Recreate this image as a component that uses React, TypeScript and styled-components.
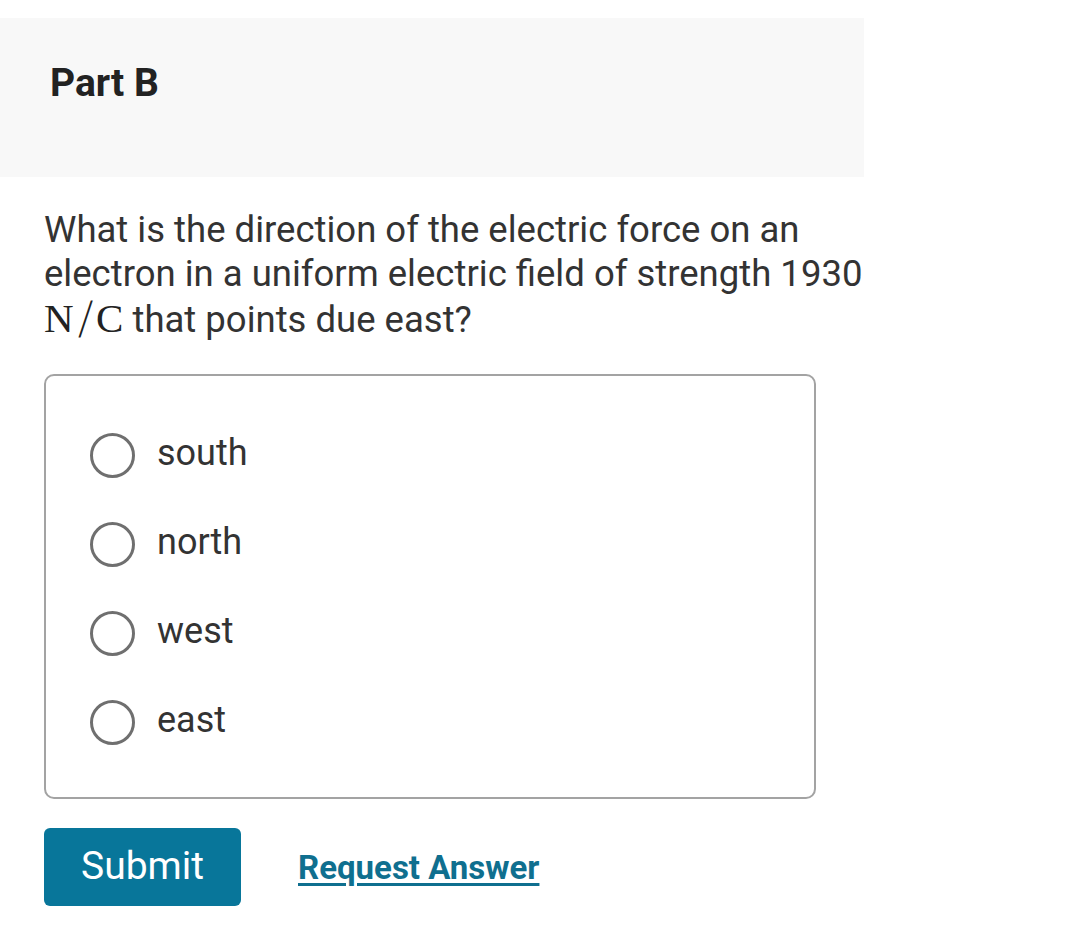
import styled, { createGlobalStyle } from "styled-components";

const GlobalStyle = createGlobalStyle`
  body {
    margin: 0;
    background: #ffffff;
    font-family: Roboto, "Liberation Sans", sans-serif;
    color: #333333;
  }
`;

const Page = styled.div`
  padding-top: 18px;
  width: 1080px;
`;

const PartHeader = styled.div`
  width: 864px;
  height: 159px;
  box-sizing: border-box;
  background: #f8f8f8;
  padding: 43px 0 0 50px;
`;

const PartTitle = styled.h2`
  margin: 0;
  font-size: 39px;
  line-height: 44px;
  font-weight: 700;
  color: #222222;
`;

const Content = styled.div`
  padding: 31px 0 0 44px;
`;

const Question = styled.p`
  margin: 0;
  font-size: 36.5px;
  line-height: 44px;
  color: #333333;
`;

const MathUnit = styled.span`
  font-family: "Liberation Serif", "DejaVu Serif", serif;
  font-size: 41px;
  color: #222222;
`;

const Slash = styled.span`
  display: inline-block;
  transform: scaleY(1.35) skewX(-6deg);
  margin: 0 5px 0 6px;
`;

const OptionBox = styled.div`
  margin-top: 32px;
  width: 772px;
  height: 425px;
  box-sizing: border-box;
  border: 2px solid #a3a3a3;
  border-radius: 10px;
  padding: 35px 0 0 44px;
  display: flex;
  flex-direction: column;
`;

const OptionRow = styled.label`
  display: flex;
  align-items: center;
  height: 89px;
  gap: 22px;
  cursor: pointer;
`;

const Radio = styled.span`
  width: 45px;
  height: 45px;
  box-sizing: border-box;
  border: 3px solid #6f6f6f;
  border-radius: 50%;
  flex-shrink: 0;
`;

const OptionText = styled.span`
  font-size: 36px;
  color: #333333;
  padding-bottom: 5px;
`;

const Actions = styled.div`
  display: flex;
  align-items: center;
  gap: 57px;
  margin-top: 29px;
`;

const SubmitButton = styled.button`
  width: 197px;
  height: 78px;
  border: none;
  border-radius: 6px;
  background: #08769a;
  color: #ffffff;
  font-family: Roboto, "Liberation Sans", sans-serif;
  font-size: 39px;
  padding: 0 0 2px;
  cursor: pointer;
`;

const RequestLink = styled.a`
  color: #0f6f8f;
  font-size: 33px;
  font-weight: 700;
  text-decoration: underline;
  text-underline-offset: 4px;
  cursor: pointer;
`;

const options = ["south", "north", "west", "east"];

const App = () => {
  return (
    <Page>
      <GlobalStyle />
      <PartHeader>
        <PartTitle>Part B</PartTitle>
      </PartHeader>
      <Content>
        <Question>
          What is the direction of the electric force on an
          <br />
          electron in a uniform electric field of strength 1930
          <br />
          <MathUnit>
            N<Slash>/</Slash>C
          </MathUnit>{" "}
          that points due east?
        </Question>
        <OptionBox>
          {options.map((o) => (
            <OptionRow key={o}>
              <Radio />
              <OptionText>{o}</OptionText>
            </OptionRow>
          ))}
        </OptionBox>
        <Actions>
          <SubmitButton>Submit</SubmitButton>
          <RequestLink>Request Answer</RequestLink>
        </Actions>
      </Content>
    </Page>
  );
};

export default App;
